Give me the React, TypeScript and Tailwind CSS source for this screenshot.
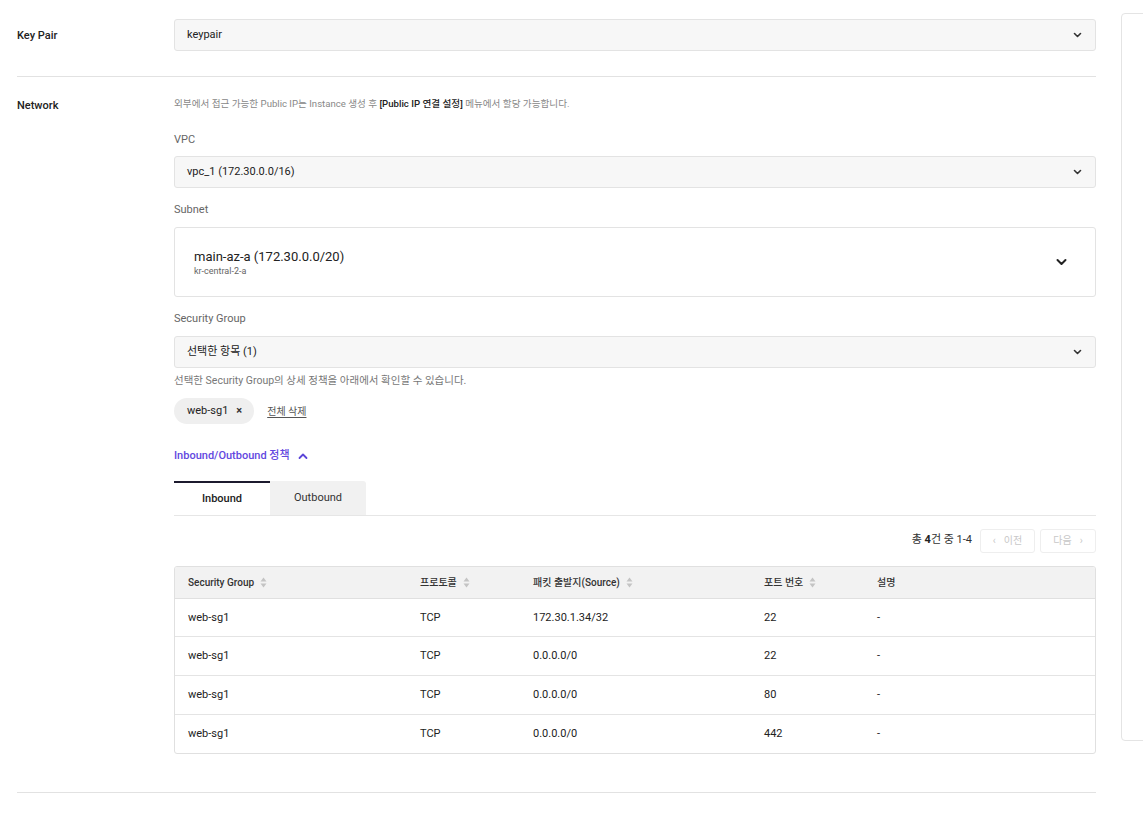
import React from "react";

const font = { fontFamily: 'Roboto, "Noto Sans CJK KR", sans-serif' };

function ChevronDown({ big = false }: { big?: boolean }) {
  return big ? (
    <svg width="11" height="8" viewBox="0 0 11 8" fill="none">
      <path d="M1.5 2 L5.5 6 L9.5 2" stroke="#222" strokeWidth="2" strokeLinecap="round" strokeLinejoin="round" />
    </svg>
  ) : (
    <svg width="9" height="6" viewBox="0 0 9 6" fill="none">
      <path d="M1.5 1.5 L4.5 4.5 L7.5 1.5" stroke="#333" strokeWidth="1.6" strokeLinecap="round" strokeLinejoin="round" />
    </svg>
  );
}

function SortIcon() {
  return (
    <svg width="7" height="11" viewBox="0 0 7 11" className="ml-[6px]">
      <path d="M3.5 0.5 L6.5 4.5 L0.5 4.5 Z" fill="#c4c4c4" />
      <path d="M3.5 10.5 L6.5 6.5 L0.5 6.5 Z" fill="#c4c4c4" />
    </svg>
  );
}

function Select({ value }: { value: string }) {
  return (
    <div className="flex h-[32px] items-center justify-between rounded-[3px] border border-[#e3e3e3] bg-[#f7f7f7] pl-[12px] pr-[13px]">
      <span className="text-[11px] text-[#222]">{value}</span>
      <ChevronDown />
    </div>
  );
}

const rows = [
  ["web-sg1", "TCP", "172.30.1.34/32", "22", "-"],
  ["web-sg1", "TCP", "0.0.0.0/0", "22", "-"],
  ["web-sg1", "TCP", "0.0.0.0/0", "80", "-"],
  ["web-sg1", "TCP", "0.0.0.0/0", "442", "-"],
];

export default function App() {
  return (
    <div style={font} className="flex h-[814px] w-[1143px] overflow-hidden bg-white text-[#222]">
      <div className="w-[1096px] shrink-0 pl-[17px]">
        {/* Key Pair */}
        <div className="flex pt-[19px] pb-[25px] border-b border-[#e2e2e2]">
          <div className="w-[157px] shrink-0 pt-[9px] text-[11px] font-medium text-[#222]">Key Pair</div>
          <div className="flex-1">
            <Select value="keypair" />
          </div>
        </div>

        {/* Network */}
        <div className="flex pt-[20px] pb-[38px] border-b border-[#e2e2e2]">
          <div className="w-[157px] shrink-0 pt-[1px] text-[11px] font-medium text-[#222]">Network</div>
          <div className="flex-1">
            <p className="text-[9.6px] leading-[14px] text-[#888]">
              외부에서 접근 가능한 Public IP는 Instance 생성 후{" "}
              <span className="font-medium text-[#222]">[Public IP 연결 설정]</span> 메뉴에서 할당 가능합니다.
            </p>

            <div className="mt-[22px] text-[11px] leading-[14px] text-[#666]">VPC</div>
            <div className="mt-[9px]">
              <Select value="vpc_1 (172.30.0.0/16)" />
            </div>

            <div className="mt-[15px] text-[11px] leading-[14px] text-[#666]">Subnet</div>
            <div className="mt-[10px] flex h-[70px] items-center justify-between rounded-[3px] border border-[#e3e3e3] bg-white pl-[19px] pr-[28px]">
              <div className="flex flex-col">
                <span className="text-[13px] leading-[17px] text-[#222]">main-az-a (172.30.0.0/20)</span>
                <span className="text-[9px] leading-[12px] text-[#666]">kr-central-2-a</span>
              </div>
              <ChevronDown big />
            </div>

            <div className="mt-[15px] text-[11px] leading-[14px] text-[#666]">Security Group</div>
            <div className="mt-[10px]">
              <Select value="선택한 항목 (1)" />
            </div>
            <p className="mt-[6px] text-[10.5px] leading-[14px] text-[#777]">
              선택한 Security Group의 상세 정책을 아래에서 확인할 수 있습니다.
            </p>

            <div className="mt-[10px] flex items-center">
              <div className="flex h-[26px] items-center rounded-full bg-[#efefef] pl-[13px] pr-[12px]">
                <span className="text-[11px] text-[#222]">web-sg1</span>
                <span className="ml-[8px] text-[11px] font-bold text-[#333]">×</span>
              </div>
              <span className="ml-[13px] text-[10px] text-[#555] underline underline-offset-2">전체 삭제</span>
            </div>

            <div className="mt-[24px] flex items-center text-[11px] font-medium text-[#6248e0]">
              Inbound/Outbound 정책
              <svg width="10" height="7" viewBox="0 0 10 7" className="ml-[8px]" fill="none">
                <path d="M1.5 5 L5 1.5 L8.5 5" stroke="#5b45d8" strokeWidth="1.8" strokeLinecap="round" strokeLinejoin="round" />
              </svg>
            </div>

            {/* Tabs */}
            <div className="mt-[16px] flex border-b border-[#e6e6e6]">
              <div className="flex h-[34px] w-[96px] items-center justify-center border-t-2 border-[#1c1a2e] bg-white pt-[1px] text-[11px] font-medium text-[#222]">
                Inbound
              </div>
              <div className="flex h-[34px] w-[96px] items-center justify-center rounded-tr-[3px] bg-[#f1f1f1] pt-[2px] text-[11px] text-[#333]">
                Outbound
              </div>
            </div>

            {/* Pagination */}
            <div className="mt-[13px] flex items-center justify-end">
              <span className="text-[11px] text-[#333]">
                총 <span className="font-bold text-[#222]">4</span>건 중 1-4
              </span>
              <div className="ml-[8px] flex h-[24px] w-[55px] items-center justify-center rounded-[3px] border border-[#eeeeee] text-[10px] text-[#c8c8c8]">
                <span className="mr-[8px]">‹</span>이전
              </div>
              <div className="ml-[5px] flex h-[24px] w-[56px] items-center justify-center rounded-[3px] border border-[#eeeeee] text-[10px] text-[#c8c8c8]">
                다음<span className="ml-[8px]">›</span>
              </div>
            </div>

            {/* Table */}
            <div className="mt-[13px] overflow-hidden rounded-[3px] border border-[#e0e0e0]">
              <div className="grid h-[32px] grid-cols-[232px_113px_231px_113px_1fr] items-center border-b border-[#e0e0e0] bg-[#f2f2f2] text-[10px] font-medium text-[#333]">
                <div className="flex items-center pl-[13px]">Security Group<SortIcon /></div>
                <div className="flex items-center pl-[13px]">프로토콜<SortIcon /></div>
                <div className="flex items-center pl-[13px]">패킷 출발지(Source)<SortIcon /></div>
                <div className="flex items-center pl-[13px]">포트 번호<SortIcon /></div>
                <div className="flex items-center pl-[13px]">설명</div>
              </div>
              {rows.map((r, i) => (
                <div
                  key={i}
                  className={`grid h-[38.7px] grid-cols-[232px_113px_231px_113px_1fr] items-center pt-[1px] text-[11px] text-[#222] ${
                    i < rows.length - 1 ? "border-b border-[#e4e4e4]" : ""
                  }`}
                >
                  {r.map((c, j) => (
                    <div key={j} className="pl-[13px]">
                      {c}
                    </div>
                  ))}
                </div>
              ))}
            </div>
          </div>
        </div>
      </div>
      <div className="ml-[25px] mt-[13px] h-[728px] w-[60px] shrink-0 rounded-[4px] border border-[#e4e4e4] bg-white" />
    </div>
  );
}
